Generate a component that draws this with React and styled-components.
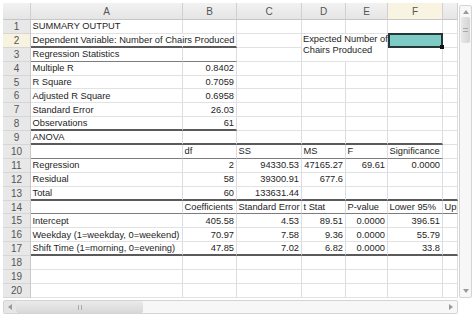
import React from 'react';
import styled, { createGlobalStyle } from 'styled-components';

const GlobalStyle = createGlobalStyle`
  html, body {
    margin: 0;
    padding: 0;
    background: #fff;
  }
  body {
    font-family: "Liberation Sans", Arial, sans-serif;
  }
`;

const Window = styled.div`
  width: 474px;
  height: 319px;
  box-sizing: border-box;
  padding: 3px 0 0 3px;
  display: flex;
  flex-direction: column;
  overflow: hidden;
`;

const Top = styled.div`
  display: flex;
  gap: 1px;
`;

const Sheet = styled.div`
  display: grid;
  grid-template-columns: 28px 152px 54px 65px 44px 42px 55px 15px;
  grid-template-rows: 17px repeat(20, 13.9px);
  font-size: 9.3px;
  color: #1e1e1e;
  overflow: hidden;
`;

const ColHead = styled.div`
  box-sizing: border-box;
  display: flex;
  align-items: center;
  justify-content: center;
  font-size: 10px;
  color: #555;
  background: ${({ $active }) => $active ? '#f8f4e1' : 'linear-gradient(#f2f2f2, #e5e5e5)'};
  border-right: 1px solid #d0d0d0;
  border-bottom: 1px solid #c6c6c6;
`;

const RowHead = styled.div`
  box-sizing: border-box;
  display: flex;
  align-items: center;
  justify-content: center;
  font-size: 10px;
  color: #555;
  background: ${({ $active }) => $active ? '#f7f3df' : '#e8e8e8'};
  border-right: 1px solid #c8c8c8;
  border-bottom: 1px solid #d6d6d6;
`;

const edges = {
  grid: '1px solid #e2e2e2',
  thin: '1px solid #7c7c7c',
  thick: '2px solid #5a5a5a',
};

const Cell = styled.div`
  box-sizing: border-box;
  display: flex;
  align-items: center;
  justify-content: ${({ $right }) => $right ? 'flex-end' : 'flex-start'};
  padding: ${({ $right }) => $right ? '0 2px 0 0' : '0 0 0 1.5px'};
  white-space: nowrap;
  overflow: ${({ $clip }) => $clip ? 'hidden' : 'visible'};
  border-right: 1px solid ${({ $open }) => $open ? 'transparent' : '#dadee4'};
  border-bottom: ${({ $edge }) => edges[$edge]};
`;

const Merged = styled.div`
  box-sizing: border-box;
  grid-row: span 2;
  grid-column: span 2;
  padding: 0 0 0 1px;
  line-height: 11.6px;
  white-space: nowrap;
  border-right: 1px solid #dadee4;
  border-bottom: 1px solid #e2e2e2;
`;

const Selected = styled.div`
  position: relative;
  z-index: 1;
  box-sizing: border-box;
  margin: -1px 0 0 0;
  background: #7ecbc6;
  border: 2px solid #243636;

  &::after {
    content: '';
    position: absolute;
    right: -3px;
    bottom: -3px;
    width: 4px;
    height: 4px;
    background: #111;
  }
`;

const VScroll = styled.div`
  box-sizing: border-box;
  width: 13px;
  height: 293px;
  margin-top: 2px;
  border: 1px solid #d4d4d4;
  border-radius: 2px;
  background: #f7f7f7;
  display: flex;
  flex-direction: column;
`;

const HScroll = styled.div`
  box-sizing: border-box;
  width: 455px;
  height: 14px;
  margin-top: 2px;
  border: 1px solid #d4d4d4;
  border-radius: 2px;
  background: #f7f7f7;
  display: flex;
`;

const ArrowBox = styled.div`
  flex: 0 0 ${({ $size }) => $size}px;
  display: flex;
  align-items: center;
  justify-content: center;
  background: ${({ $shade }) => $shade ? '#e6e6e6' : 'transparent'};
`;

const Thumb = styled.div`
  display: flex;
  align-items: center;
  justify-content: center;
  ${({ $vertical }) => $vertical
    ? 'flex: 0 0 26px; margin: 0 1px; background: linear-gradient(90deg, #e8e8e8, #d4d4d4);'
    : 'flex: 0 0 127px; background: linear-gradient(#ebebeb, #d7d7d7);'}
  border-radius: 2px;
`;

const Track = styled.div`
  flex: 1;
`;

const Grip = styled.div`
  width: ${({ $vertical }) => $vertical ? '5px' : '2px'};
  height: ${({ $vertical }) => $vertical ? '2px' : '5px'};
  border: 1px solid #a8a8a8;
  ${({ $vertical }) => $vertical ? 'border-left: 0; border-right: 0;' : 'border-top: 0; border-bottom: 0;'}
`;

const arrowPoints = {
  up: '0,4 3,0 6,4',
  down: '0,0 3,4 6,0',
  left: '4,0 0,3 4,6',
  right: '0,0 4,3 0,6',
};

const Arrow = ({ dir }) => {
  const flat = dir === 'up' || dir === 'down';
  return (
    <svg width={flat ? 6 : 4} height={flat ? 4 : 6} viewBox={flat ? '0 0 6 4' : '0 0 4 6'}>
      <polygon points={arrowPoints[dir]} fill="#9a9a9a" />
    </svg>
  );
};

const MERGE = 'merge';
const SKIP = 'skip';
const SEL = 'sel';

const L = (t, extra) => ({ t, ...extra });
const R = (t) => ({ t, right: true });

const rows = [
  { cells: [L('SUMMARY OUTPUT')] },
  {
    active: true,
    cells: [L('Dependent Variable: Number of Chairs Produced', { open: true }), null, null, MERGE, SKIP, SEL, null],
    edge: ['thick', 2],
  },
  { cells: [L('Regression Statistics'), null, null, SKIP, SKIP, null, null], edge: ['thin', 2] },
  { cells: [L('Multiple R'), R('0.8402')] },
  { cells: [L('R Square'), R('0.7059')] },
  { cells: [L('Adjusted R Square'), R('0.6958')] },
  { cells: [L('Standard Error'), R('26.03')] },
  { cells: [L('Observations'), R('61')], edge: ['thick', 2] },
  { cells: [L('ANOVA')], edge: ['thick', 6] },
  { cells: [null, L('df'), L('SS'), L('MS'), L('F'), L('Significance')], edge: ['thin', 6] },
  { cells: [L('Regression'), R('2'), R('94330.53'), R('47165.27'), R('69.61'), R('0.0000')] },
  { cells: [L('Residual'), R('58'), R('39300.91'), R('677.6')] },
  { cells: [L('Total'), R('60'), R('133631.44')], edge: ['thick', 7] },
  {
    cells: [null, L('Coefficients'), L('Standard Error', { clip: true }), L('t Stat'), L('P-value'), L('Lower 95%'), L('Upper 95%', { clip: true })],
    edge: ['thin', 7],
  },
  { cells: [L('Intercept'), R('405.58'), R('4.53'), R('89.51'), R('0.0000'), R('396.51')] },
  { cells: [L('Weekday (1=weekday, 0=weekend)'), R('70.97'), R('7.58'), R('9.36'), R('0.0000'), R('55.79')] },
  { cells: [L('Shift Time (1=morning, 0=evening)'), R('47.85'), R('7.02'), R('6.82'), R('0.0000'), R('33.8')], edge: ['thick', 7] },
  { cells: [] },
  { cells: [] },
  { cells: [] },
];

const columns = ['', 'A', 'B', 'C', 'D', 'E', 'F', ''];

const SheetRow = ({ row, index }) => {
  const [kind, span] = row.edge || ['grid', 0];
  const out = [
    <RowHead key="h" $active={row.active}>{index + 1}</RowHead>,
  ];
  for (let i = 0; i < 7; i++) {
    const c = row.cells[i];
    if (c === SKIP) continue;
    if (c === MERGE) {
      out.push(
        <Merged key={i}>
          Expected Number of<br />Chairs Produced
        </Merged>
      );
      continue;
    }
    if (c === SEL) {
      out.push(<Selected key={i} />);
      continue;
    }
    out.push(
      <Cell
        key={i}
        $right={c && c.right}
        $open={c && c.open}
        $clip={c && c.clip}
        $edge={i < span ? kind : 'grid'}
      >
        {c ? c.t : null}
      </Cell>
    );
  }
  return out;
};

const App = () => (
  <>
    <GlobalStyle />
    <Window>
      <Top>
        <Sheet>
          {columns.map((c, i) => (
            <ColHead key={i} $active={c === 'F'}>{c}</ColHead>
          ))}
          {rows.map((row, i) => (
            <SheetRow key={i} row={row} index={i} />
          ))}
        </Sheet>
        <VScroll>
          <ArrowBox $size={11}><Arrow dir="up" /></ArrowBox>
          <Thumb $vertical><Grip $vertical /></Thumb>
          <Track />
          <ArrowBox $size={12}><Arrow dir="down" /></ArrowBox>
        </VScroll>
      </Top>
      <HScroll>
        <ArrowBox $size={12} $shade><Arrow dir="left" /></ArrowBox>
        <Thumb><Grip /></Thumb>
        <Track />
        <ArrowBox $size={12}><Arrow dir="right" /></ArrowBox>
      </HScroll>
    </Window>
  </>
);

export default App;
